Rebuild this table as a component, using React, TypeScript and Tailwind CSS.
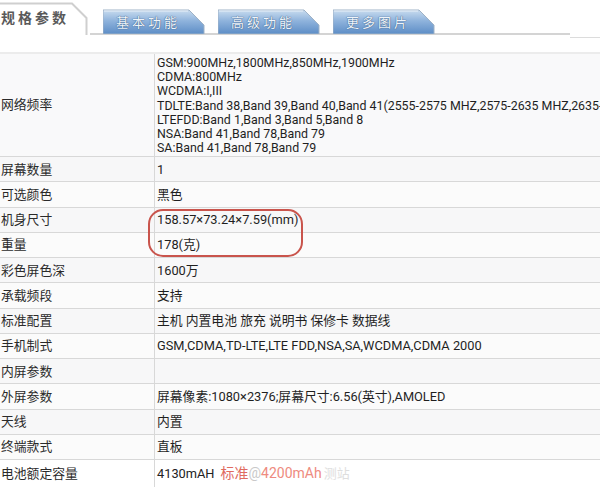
import React from "react";

const rows: { label: string; value: React.ReactNode; h?: string }[] = [
  { label: "屏幕数量", value: "1" },
  { label: "可选颜色", value: "黑色" },
  { label: "机身尺寸", value: "158.57×73.24×7.59(mm)" },
  { label: "重量", value: "178(克)" },
  { label: "彩色屏色深", value: "1600万" },
  { label: "承载频段", value: "支持" },
  { label: "标准配置", value: "主机 内置电池 旅充 说明书 保修卡 数据线" },
  { label: "手机制式", value: "GSM,CDMA,TD-LTE,LTE FDD,NSA,SA,WCDMA,CDMA 2000" },
  { label: "内屏参数", value: "" },
  { label: "外屏参数", value: "屏幕像素:1080×2376;屏幕尺寸:6.56(英寸),AMOLED" },
  { label: "天线", value: "内置" },
  { label: "终端款式", value: "直板" },
];

const net = [
  "GSM:900MHz,1800MHz,850MHz,1900MHz",
  "CDMA:800MHz",
  "WCDMA:I,III",
  "TDLTE:Band 38,Band 39,Band 40,Band 41(2555-2575 MHZ,2575-2635 MHZ,2635-2655 MHZ)",
  "LTEFDD:Band 1,Band 3,Band 5,Band 8",
  "NSA:Band 41,Band 78,Band 79",
  "SA:Band 41,Band 78,Band 79",
];

function BlueTab({ text }: { text: string }) {
  return (
    <div className="relative w-[102px] h-[25px]">
      <svg className="absolute inset-0" width="102" height="25" viewBox="0 0 102 25">
        <defs>
          <linearGradient id="bt" x1="0" y1="0" x2="0" y2="1">
            <stop offset="0" stopColor="#c9dcef" />
            <stop offset="0.45" stopColor="#8fb3dc" />
            <stop offset="1" stopColor="#5d8dc6" />
          </linearGradient>
        </defs>
        <path d="M0 25 L0 1 L86 1 L101 16 L101 25 Z" fill="url(#bt)" stroke="#9fb2c6" strokeWidth="1" />
        <path d="M1 2 L85 2" stroke="#e8f0f8" strokeWidth="1" />
      </svg>
      <div className="relative pl-[13px] pt-[4px] text-[13px] leading-[17px] tracking-[3px] text-[#eef4fb] [text-shadow:0_0_1px_#3d5f86,0_0_1px_#3d5f86] [font-family:'Noto_Sans_CJK_SC',sans-serif]">
        {text}
      </div>
    </div>
  );
}

export default function App() {
  const cjk = "[font-family:Roboto,'Noto_Sans_CJK_SC',sans-serif]";
  return (
    <div className={`w-[600px] h-[487px] overflow-hidden bg-white text-[#222] ${cjk}`}>
      {/* tab bar */}
      <div className="relative h-[54px]">
        <div className="flex items-start">
          <div className="relative w-[90px] h-[35px] shrink-0">
            <svg className="absolute inset-0" width="90" height="35" viewBox="0 0 90 35">
              <path d="M0 3.5 L72 3.5 L86.5 18 L86.5 35" fill="none" stroke="#cfcfcf" strokeWidth="2" />
            </svg>
            <div className="relative pl-[1px] pt-[8px] text-[14px] leading-[18px] font-bold tracking-[3px] text-[#5a5a5a] [font-family:'Noto_Sans_CJK_SC',sans-serif]">
              规格参数
            </div>
          </div>
          <div className="flex gap-[13px] pl-[13px] pt-[9px] border-b-2 border-[#d4d4d4] w-[480px] h-[35px] box-border">
            <BlueTab text="基本功能" />
            <BlueTab text="高级功能" />
            <BlueTab text="更多图片" />
          </div>
          <div className="flex-1 h-[38px] border-b border-[#dcdcdc]" />
        </div>
        <div className="absolute left-0 right-0 bottom-0 h-[2px] bg-[#ececec]" />
      </div>

      {/* table */}
      <div className="relative">
        <div className="flex border-b border-[#d8d8d8] bg-[#f9f9fa] h-[103px] box-border">
          <div className="w-[155px] shrink-0 border-r border-[#d8d8d8] flex items-center pl-[1px] text-[12.8px] text-[#2a2a2a]">
            网络频率
          </div>
          <div className="pl-[2px] pt-[2px] text-[12.4px] leading-[14.2px] whitespace-nowrap text-[#1f1f1f]">
            {net.map((l) => (
              <div key={l}>{l}</div>
            ))}
          </div>
        </div>
        {rows.map((r, i) => (
          <div
            key={r.label}
            className={`flex border-b border-[#d8d8d8] h-[25.25px] box-border ${i % 2 === 0 ? "bg-[#f7f7f8]" : "bg-[#fbfbfb]"}`}
          >
            <div className="w-[155px] shrink-0 border-r border-[#d8d8d8] flex items-center pl-[1px] text-[12.8px] text-[#2a2a2a]">
              {r.label}
            </div>
            <div className="pl-[2px] flex items-center text-[12.8px] whitespace-nowrap text-[#1f1f1f]">{r.value}</div>
          </div>
        ))}
        <div className="flex h-[30px] bg-white">
          <div className="w-[155px] shrink-0 border-r border-[#d8d8d8] flex items-center pl-[1px] text-[12.8px] pb-[3px] text-[#2a2a2a]">
            电池额定容量
          </div>
          <div className="pl-[2px] flex items-center text-[12.8px] whitespace-nowrap pb-[3px]">
            <span>4130mAH</span>
            <span className="ml-[6px] text-[14px] text-[#e06a5f]">标准</span>
            <span className="text-[14px] text-[#c9c9c9]">@</span>
            <span className="text-[14px] text-[#ee8b80]">4200mAh</span>
            <span className="ml-[2px] text-[13px] text-[#dedede]">测站</span>
          </div>
        </div>
        {/* red highlight oval */}
        <div className="absolute left-[148px] top-[155px] w-[155px] h-[48px] border-2 border-[#c9544c] rounded-[15px]" />
      </div>
    </div>
  );
}
